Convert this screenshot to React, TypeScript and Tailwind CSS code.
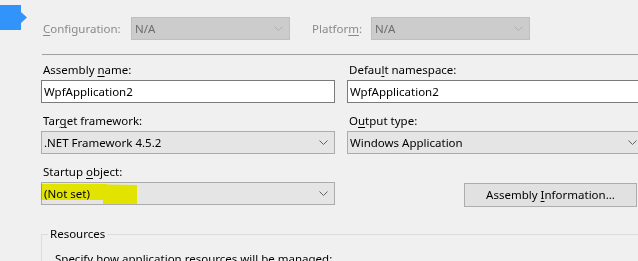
import React from "react";

const Chevron = ({ color }: { color: string }) => (
  <svg width="9" height="5" viewBox="0 0 9 5" className="shrink-0">
    <polyline points="0.5,0.5 4.5,4.5 8.5,0.5" fill="none" stroke={color} strokeWidth="1" />
  </svg>
);

const U = ({ children }: { children: React.ReactNode }) => (
  <span className="underline underline-offset-[2px] decoration-1">{children}</span>
);

const Label = ({ children }: { children: React.ReactNode }) => (
  <div className="h-[20px] leading-[20px] pl-[2px] whitespace-nowrap">{children}</div>
);

const Combo = ({ text, highlight }: { text: string; highlight?: boolean }) => (
  <div className="relative h-[23px] border border-[#acacac] bg-[#e5e5e5] flex items-center pl-[2px] pr-[6px]">
    <span className="flex-1 whitespace-nowrap leading-[21px]">{text}</span>
    <Chevron color="#606060" />
    {highlight && (
      <svg
        className="absolute left-[-1px] top-[1px] mix-blend-multiply pointer-events-none"
        width="97"
        height="20"
        viewBox="0 0 97 20"
      >
        <polygon points="0,0 66,0 66,0.5 96,1 96,20 62,20 62,16 0,16" fill="#fdfd00" />
      </svg>
    )}
  </div>
);

const TextBox = ({ text }: { text: string }) => (
  <div className="h-[23px] border border-[#7a7a7a] bg-white flex items-center pl-[2px]">
    <span className="whitespace-nowrap leading-[21px]">{text}</span>
  </div>
);

const DisabledCombo = () => (
  <div className="w-[159px] h-[23px] border border-[#bfbfbf] bg-[#cccccc] flex items-center pl-[3px] pr-[6px]">
    <span className="flex-1 text-[#6d6d6d] leading-[21px]">N/A</span>
    <Chevron color="#b0b0b0" />
  </div>
);

export default function App() {
  return (
    <div className="w-[638px] h-[261px] overflow-hidden bg-[#f0f0f0] text-[11.5px] text-black font-['Noto_Sans',sans-serif]">
      {/* top configuration row */}
      <div className="flex h-[55px]">
        <div className="w-[41px] shrink-0 pt-[5px]">
          <svg width="28" height="25" viewBox="0 0 28 25">
            <polygon points="0,0 21,0 21,7 27,12.5 21,18 21,25 0,25" fill="#3294fb" />
          </svg>
        </div>
        <div className="flex-1 flex flex-col">
          <div className="flex items-center pt-[17px]">
            <div className="w-[90px] pl-[2px] text-[#8a8a8a] whitespace-nowrap">
              <U>C</U>onfiguration:
            </div>
            <DisabledCombo />
            <div className="w-[59px] ml-[22px] text-[#8a8a8a] whitespace-nowrap">
              Platfor<U>m</U>:
            </div>
            <DisabledCombo />
          </div>
          <div className="mt-auto h-px bg-[#a0a0a0] ml-[1px]" />
        </div>
      </div>

      {/* fields */}
      <div className="grid grid-cols-[294px_297px] gap-x-[12px] pl-[41px] pt-[5px]">
        <div className="pb-[8px]">
          <Label>
            Assembly <U>n</U>ame:
          </Label>
          <TextBox text="WpfApplication2" />
        </div>
        <div className="pb-[8px]">
          <Label>
            Defau<U>l</U>t namespace:
          </Label>
          <TextBox text="WpfApplication2" />
        </div>
        <div className="pb-[8px]">
          <Label>
            Tar<U>g</U>et framework:
          </Label>
          <Combo text=".NET Framework 4.5.2" />
        </div>
        <div className="pb-[8px]">
          <Label>
            O<U>u</U>tput type:
          </Label>
          <Combo text="Windows Application" />
        </div>
        <div className="pb-[8px]">
          <Label>
            Startup <U>o</U>bject:
          </Label>
          <Combo text="(Not set)" highlight />
        </div>
        <div className="flex justify-end pt-[21px] pr-[7px]">
          <button className="w-[173px] h-[24px] border border-[#adadad] bg-[#e1e1e1] text-center leading-[22px] whitespace-nowrap">
            Assembly <U>I</U>nformation...
          </button>
        </div>
      </div>

      {/* resources group */}
      <fieldset className="ml-[41px] mt-[13px] w-[603px] border border-[#dcdcdc] p-0 h-[80px]">
        <legend className="ml-[6px] px-[2px] leading-[16px]">Resources</legend>
        <div className="pl-[13px] pt-[8px] leading-[18px] whitespace-nowrap">
          Specify how application resources will be managed:
        </div>
      </fieldset>
    </div>
  );
}
